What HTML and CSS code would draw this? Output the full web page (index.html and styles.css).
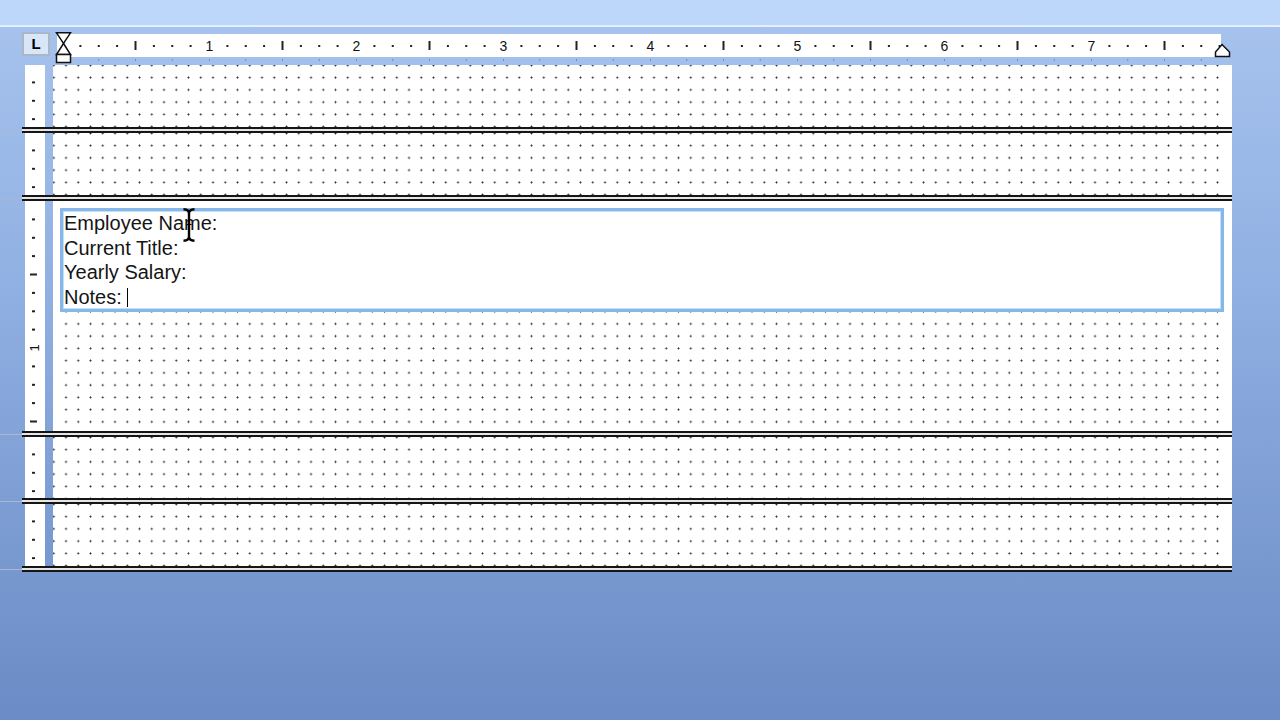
FILE: index.html
```
<!DOCTYPE html>
<html>
<head>
<meta charset="utf-8">
<title>Report Design</title>
<link rel="stylesheet" href="styles.css">
</head>
<body>
<div class="topband"></div>
<div class="topline"></div>
<div class="rulerrow">
  <div class="lbox">L</div>
  <svg class="hruler" width="1179" height="33" viewBox="0 0 1179 33">
    <defs>
      <pattern id="rt" patternUnits="userSpaceOnUse" x="9" y="0" width="147" height="33">
        <rect x="17.4" y="13" width="2" height="2" fill="#222"/>
        <rect x="35.75" y="13" width="2" height="2" fill="#222"/>
        <rect x="54.1" y="13" width="2" height="2" fill="#222"/>
        <rect x="72.5" y="9" width="2" height="9" fill="#222"/>
        <rect x="90.9" y="13" width="2" height="2" fill="#222"/>
        <rect x="109.25" y="13" width="2" height="2" fill="#222"/>
        <rect x="127.6" y="13" width="2" height="2" fill="#222"/>
        <rect x="0" y="27" width="1" height="2" fill="#6a8cc4"/>
        <rect x="36.25" y="27" width="1" height="2" fill="#6a8cc4"/>
        <rect x="73" y="27" width="1" height="2" fill="#6a8cc4"/>
        <rect x="109.75" y="27" width="1" height="2" fill="#6a8cc4"/>
      </pattern>
    </defs>
    <rect x="4" y="2" width="1164" height="23" fill="#ffffff"/>
    <rect x="9" y="0" width="1159" height="33" fill="url(#rt)"/>
    <g class="rnum">
      <text x="156.5" y="19">1</text>
      <text x="303.5" y="19">2</text>
      <text x="450.5" y="19">3</text>
      <text x="597.5" y="19">4</text>
      <text x="744.5" y="19">5</text>
      <text x="891.5" y="19">6</text>
      <text x="1038.5" y="19">7</text>
    </g>
    <g fill="#fff" stroke="#111" stroke-width="1.5" stroke-linejoin="miter">
      <polygon points="3.5,0.8 17.5,0.8 10.5,11.5"/>
      <polygon points="10.5,11.5 3.5,22.5 17.5,22.5"/>
      <rect x="3.5" y="22.5" width="14" height="8"/>
      <polygon points="1169,12.5 1176.5,20 1176.5,24.5 1162.5,24.5 1162.5,20"/>
    </g>
  </svg>
</div>

<div class="section s1">
  <div class="vgap"></div>
  <div class="vruler dashes"></div>
  <div class="vstrip"></div>
  <div class="grid"></div>
</div>
<div class="sep"><div class="sepleft"></div><div class="sepline"></div></div>

<div class="section s2">
  <div class="vgap"></div>
  <div class="vruler dashes"></div>
  <div class="vstrip"></div>
  <div class="grid"></div>
</div>
<div class="sep"><div class="sepleft"></div><div class="sepline"></div></div>

<div class="section s3">
  <div class="vgap"></div>
  <svg class="vruler" width="20" height="230" viewBox="0 0 20 230">
    <g fill="#222">
      <rect x="7" y="17.4" width="3" height="2"/>
      <rect x="7" y="35.8" width="3" height="2"/>
      <rect x="7" y="54.1" width="3" height="2"/>
      <rect x="5" y="72.5" width="7" height="2"/>
      <rect x="7" y="90.9" width="3" height="2"/>
      <rect x="7" y="109.3" width="3" height="2"/>
      <rect x="7" y="127.6" width="3" height="2"/>
      <rect x="7" y="164.4" width="3" height="2"/>
      <rect x="7" y="182.8" width="3" height="2"/>
      <rect x="7" y="201.1" width="3" height="2"/>
      <rect x="5" y="219.5" width="7" height="2"/>
    </g>
    <text class="vnum" x="0" y="0" transform="translate(13.5 147) rotate(-90)">1</text>
  </svg>
  <div class="vstrip"></div>
  <div class="grid gridpad">
    <div class="textbox">
      <div class="line">Employee Name:</div>
      <div class="line">Current Title:</div>
      <div class="line">Yearly Salary:</div>
      <div class="line">Notes: <span class="caret"></span></div>
      <svg class="ibeam" width="14" height="34" viewBox="0 0 14 34">
        <path d="M1.5 1.3 Q7 1.5 7 5.5 V28.5 Q7 32.5 1.5 32.7 M12.5 1.3 Q7 1.5 7 5.5 M12.5 32.7 Q7 32.5 7 28.5" fill="none" stroke="#000" stroke-width="2.4"/>
        <path d="M4.5 16.5 H9.5" stroke="#000" stroke-width="1.2"/>
      </svg>
    </div>
  </div>
</div>
<div class="sep"><div class="sepleft"></div><div class="sepline"></div></div>

<div class="section s4">
  <div class="vgap"></div>
  <div class="vruler dashes"></div>
  <div class="vstrip"></div>
  <div class="grid"></div>
</div>
<div class="sep"><div class="sepleft"></div><div class="sepline"></div></div>

<div class="section s5">
  <div class="vgap"></div>
  <div class="vruler dashes"></div>
  <div class="vstrip"></div>
  <div class="grid"></div>
</div>
<div class="sep"><div class="sepleft"></div><div class="sepline"></div></div>
</body>
</html>
```

FILE: styles.css
```
html, body {
  margin: 0;
  padding: 0;
}
body {
  width: 1280px;
  height: 720px;
  overflow: hidden;
  font-family: "Liberation Sans", Arial, sans-serif;
  background: linear-gradient(to bottom, #a8c4ee 0px, #8fafe2 300px, #6a8bc5 720px);
}
.topband {
  height: 25px;
  background: #bdd7fa;
}
.topline {
  height: 2px;
  background: #e4effd;
}
.rulerrow {
  display: flex;
  margin-top: 5px;
  margin-left: 22px;
  height: 33px;
  gap: 3px;
}
.lbox {
  box-sizing: border-box;
  width: 28px;
  height: 24px;
  border: 2px solid #aab6c9;
  background: #d9e6f7;
  font-family: "Liberation Sans", Arial, sans-serif;
  font-weight: bold;
  font-size: 15px;
  line-height: 20px;
  text-align: center;
  color: #000;
}
.hruler {
  display: block;
}
.rnum text {
  font-family: "Liberation Sans", Arial, sans-serif;
  font-size: 14px;
  fill: #111;
  text-anchor: middle;
}
.section {
  display: flex;
  margin-left: 22px;
  width: 1210px;
}
.s1 { height: 62px; }
.s2 { height: 62px; }
.s3 { height: 230px; }
.s4 { height: 61px; }
.s5 { height: 62px; }
.vgap {
  width: 3px;
}
.vruler {
  display: block;
  width: 20px;
  background-color: #fff;
}
.dashes {
  background-image: linear-gradient(to bottom, transparent 16.4px, #222 16.4px, #222 18.375px);
  background-size: 3px 18.375px;
  background-repeat: repeat-y;
  background-position: 7px 0;
}
.vnum {
  font-family: "Liberation Sans", Arial, sans-serif;
  font-size: 13px;
  fill: #111;
  text-anchor: middle;
}
.vstrip {
  width: 8px;
}
.grid {
  flex: 1;
  box-sizing: border-box;
  padding-right: 6px;
  background-image: radial-gradient(circle, #262626 0.75px, transparent 1.2px), linear-gradient(#fff, #fff);
  background-size: 12.25px 12.25px, 100% 100%;
  background-position: 6.9px 6.5px, 0 0;
  background-clip: content-box, border-box;
  background-repeat: repeat, no-repeat;
}
.gridpad {
  padding: 7px 6px 0 7px;
}
.textbox {
  position: relative;
  box-sizing: border-box;
  width: 1164px;
  height: 104px;
  border: 3px solid #84b7ea;
  box-shadow: inset 0 0 0 1px #c8def5;
  background: #fff;
  padding-left: 1px;
  font-family: "Liberation Sans", Arial, sans-serif;
  font-size: 20px;
  line-height: 24.5px;
  color: #151515;
}
.line {
  height: 24.5px;
  white-space: pre;
}
.caret {
  display: inline-block;
  width: 0;
  height: 19px;
  border-left: 1.5px solid #000;
  vertical-align: -3px;
}
.ibeam {
  position: absolute;
  left: 119px;
  top: -3px;
}
.sep {
  display: flex;
  width: 1232px;
  height: 6px;
}
.sepleft {
  width: 22px;
  height: 1px;
  margin-top: 2.5px;
  background: #a9b8cf;
}
.sepline {
  width: 1210px;
  box-sizing: border-box;
  border-top: 2px solid #151515;
  border-bottom: 2px solid #151515;
  background: #e6e6e6;
}
```
